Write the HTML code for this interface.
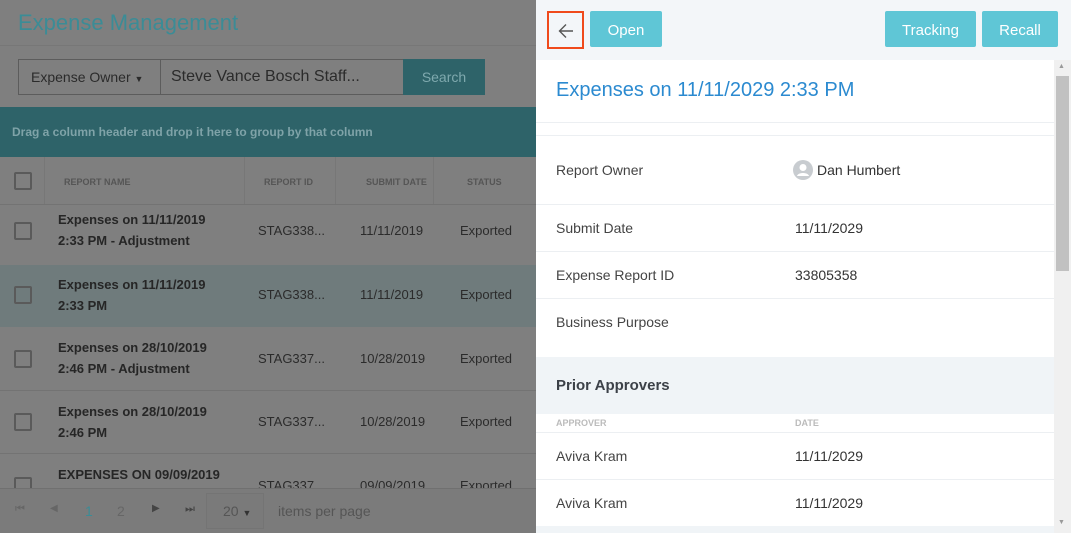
<!DOCTYPE html>
<html><head><meta charset="utf-8"><style>
*{box-sizing:border-box;margin:0;padding:0}
body{width:1071px;height:533px;overflow:hidden;font-family:"Liberation Sans",sans-serif;background:#7f7f7f;position:relative}
.a{position:absolute}
.cb{position:absolute;left:14px;width:18px;height:18px;border:2px solid #5a5a5a;border-radius:2px}
.rn{position:absolute;left:58px;font-weight:bold;font-size:13px;color:#262626;line-height:21px}
.rc{position:absolute;font-size:13px;color:#2b2b2b}
.hr{position:absolute;left:0;width:536px;height:1px;background:#737373}
.btn{position:absolute;top:11px;height:36px;background:#5fc6d6;color:#fff;font-size:15px;text-align:center;line-height:36px;padding-top:2px;border-radius:2px}
.lab{position:absolute;left:556px;font-size:14px;color:#444}
.val{position:absolute;left:795px;font-size:14px;color:#333}
.sep{position:absolute;left:536px;width:518px;height:1px;background:#eceff2}
</style></head><body>
<div class="a" style="left:18px;top:10px;font-size:22px;color:#3b8c96">Expense Management</div>
<div class="a" style="left:0;top:45px;width:536px;height:1px;background:#777"></div>
<div class="a" style="left:18px;top:59px;width:143px;height:36px;border:1px solid #5c5c5c;font-size:14px;color:#2b2b2b;line-height:34px;padding-left:12px">Expense Owner <span style="font-size:9px">▼</span></div>
<div class="a" style="left:160px;top:59px;width:244px;height:36px;border:1px solid #5c5c5c;border-left:none;font-size:16px;color:#2b2b2b;line-height:34px;padding-left:11px">Steve Vance Bosch Staff...</div>
<div class="a" style="left:403px;top:59px;width:82px;height:36px;background:#2e6369;color:#7fa9ae;font-size:14px;text-align:center;line-height:36px">Search</div>
<div class="a" style="left:0;top:107px;width:536px;height:50px;background:#2e6369;color:#7fa3a8;font-size:12px;font-weight:bold;line-height:50px;padding-left:12px">Drag a column header and drop it here to group by that column</div>
<div class="cb" style="top:172px"></div>
<div class="a" style="left:44px;top:157px;width:1px;height:47px;background:#777"></div>
<div class="a" style="left:244px;top:157px;width:1px;height:47px;background:#777"></div>
<div class="a" style="left:335px;top:157px;width:1px;height:47px;background:#777"></div>
<div class="a" style="left:433px;top:157px;width:1px;height:47px;background:#777"></div>
<div class="a" style="left:64px;top:177px;font-size:9px;font-weight:bold;color:#555">REPORT NAME</div>
<div class="a" style="left:264px;top:177px;font-size:9px;font-weight:bold;color:#555">REPORT ID</div>
<div class="a" style="left:366px;top:177px;font-size:9px;font-weight:bold;color:#555">SUBMIT DATE</div>
<div class="a" style="left:467px;top:177px;font-size:9px;font-weight:bold;color:#555">STATUS</div>
<div class="hr" style="top:204px"></div>
<div class="cb" style="top:222px"></div>
<div class="rn" style="top:209px">Expenses on 11/11/2019<br>2:33 PM - Adjustment</div>
<div class="rc" style="left:258px;top:223px">STAG338...</div><div class="rc" style="left:360px;top:223px">11/11/2019</div><div class="rc" style="left:460px;top:223px">Exported</div>
<div class="a" style="left:0;top:265px;width:536px;height:62px;background:#6f7b7c"></div>
<div class="cb" style="top:286px"></div>
<div class="rn" style="top:274px">Expenses on 11/11/2019<br>2:33 PM</div>
<div class="rc" style="left:258px;top:287px">STAG338...</div><div class="rc" style="left:360px;top:287px">11/11/2019</div><div class="rc" style="left:460px;top:287px">Exported</div>
<div class="cb" style="top:350px"></div>
<div class="rn" style="top:337px">Expenses on 28/10/2019<br>2:46 PM - Adjustment</div>
<div class="rc" style="left:258px;top:351px">STAG337...</div><div class="rc" style="left:360px;top:351px">10/28/2019</div><div class="rc" style="left:460px;top:351px">Exported</div>
<div class="hr" style="top:390px"></div>
<div class="cb" style="top:413px"></div>
<div class="rn" style="top:401px">Expenses on 28/10/2019<br>2:46 PM</div>
<div class="rc" style="left:258px;top:414px">STAG337...</div><div class="rc" style="left:360px;top:414px">10/28/2019</div><div class="rc" style="left:460px;top:414px">Exported</div>
<div class="hr" style="top:453px"></div>
<div class="a" style="left:0;top:454px;width:536px;height:34px;overflow:hidden">
<div class="cb" style="top:23px"></div>
<div class="rn" style="top:10px">EXPENSES ON 09/09/2019</div>
<div class="rc" style="left:258px;top:24px">STAG337...</div><div class="rc" style="left:360px;top:24px">09/09/2019</div><div class="rc" style="left:460px;top:24px">Exported</div>
</div>
<div class="a" style="left:0;top:488px;width:536px;height:45px;background:#7b7b7b;border-top:1px solid #707070"></div>
<div class="a" style="left:15px;top:503px;font-size:11px;color:#666">⏮</div>
<div class="a" style="left:50px;top:503px;font-size:10px;color:#666">◀</div>
<div class="a" style="left:85px;top:503px;font-size:14px;color:#3b8c96">1</div>
<div class="a" style="left:117px;top:503px;font-size:14px;color:#666">2</div>
<div class="a" style="left:152px;top:503px;font-size:10px;color:#444">▶</div>
<div class="a" style="left:185px;top:503px;font-size:11px;color:#444">⏭</div>
<div class="a" style="left:206px;top:493px;width:58px;height:36px;background:#7a7a7a;border:1px solid #747474;font-size:14px;color:#555;line-height:34px;padding-left:16px">20 <span style="font-size:9px;color:#333">▼</span></div>
<div class="a" style="left:278px;top:503px;font-size:14px;color:#555">items per page</div>

<div class="a" style="left:536px;top:0;width:535px;height:60px;background:#f3f6f9"></div>
<div class="a" style="left:547px;top:11px;width:37px;height:38px;border:2px solid #f04a1c"></div>
<svg class="a" style="left:556px;top:21px" width="20" height="20" viewBox="0 0 20 20"><path d="M17 10H4M10 3.5L3.5 10L10 16.5" stroke="#555" stroke-width="1.4" fill="none"/></svg>
<div class="btn" style="left:590px;width:72px">Open</div>
<div class="btn" style="left:885px;width:91px">Tracking</div>
<div class="btn" style="left:982px;width:76px">Recall</div>
<div class="a" style="left:536px;top:60px;width:518px;height:473px;background:#fff"></div>
<div class="a" style="left:1054px;top:60px;width:17px;height:473px;background:#f0f0f0"></div>
<div class="a" style="left:1056px;top:76px;width:13px;height:195px;background:#c1c1c1"></div>
<div class="a" style="left:1058px;top:63px;font-size:7px;color:#999">▲</div>
<div class="a" style="left:1058px;top:519px;font-size:7px;color:#999">▼</div>
<div class="a" style="left:556px;top:79px;font-size:20px;color:#2b8ad0">Expenses on 11/11/2029 2:33 PM</div>
<div class="sep" style="top:122px"></div><div class="sep" style="top:135px"></div>
<div class="lab" style="top:162px">Report Owner</div>
<svg class="a" style="left:793px;top:160px" width="20" height="20" viewBox="0 0 20 20"><circle cx="10" cy="10" r="10" fill="#c8ccd0"/><circle cx="10" cy="7.5" r="3.5" fill="#fff"/><path d="M4 16c1-4 11-4 12 0" fill="#fff"/></svg>
<div class="val" style="left:817px;top:162px">Dan Humbert</div>
<div class="sep" style="top:204px"></div>
<div class="lab" style="top:220px">Submit Date</div><div class="val" style="top:220px">11/11/2029</div>
<div class="sep" style="top:251px"></div>
<div class="lab" style="top:267px">Expense Report ID</div><div class="val" style="top:267px">33805358</div>
<div class="sep" style="top:298px"></div>
<div class="lab" style="top:314px">Business Purpose</div>
<div class="a" style="left:536px;top:357px;width:518px;height:57px;background:#f0f4f7"></div>
<div class="a" style="left:556px;top:377px;font-size:15px;font-weight:bold;color:#3c4148">Prior Approvers</div>
<div class="a" style="left:556px;top:418px;font-size:9px;font-weight:bold;color:#bbb">APPROVER</div>
<div class="a" style="left:795px;top:418px;font-size:9px;font-weight:bold;color:#bbb">DATE</div>
<div class="sep" style="top:432px"></div>
<div class="lab" style="top:448px">Aviva Kram</div><div class="val" style="top:448px">11/11/2029</div>
<div class="sep" style="top:479px"></div>
<div class="lab" style="top:495px">Aviva Kram</div><div class="val" style="top:495px">11/11/2029</div>
<div class="a" style="left:536px;top:526px;width:518px;height:7px;background:#f0f4f7"></div>
</body></html>
